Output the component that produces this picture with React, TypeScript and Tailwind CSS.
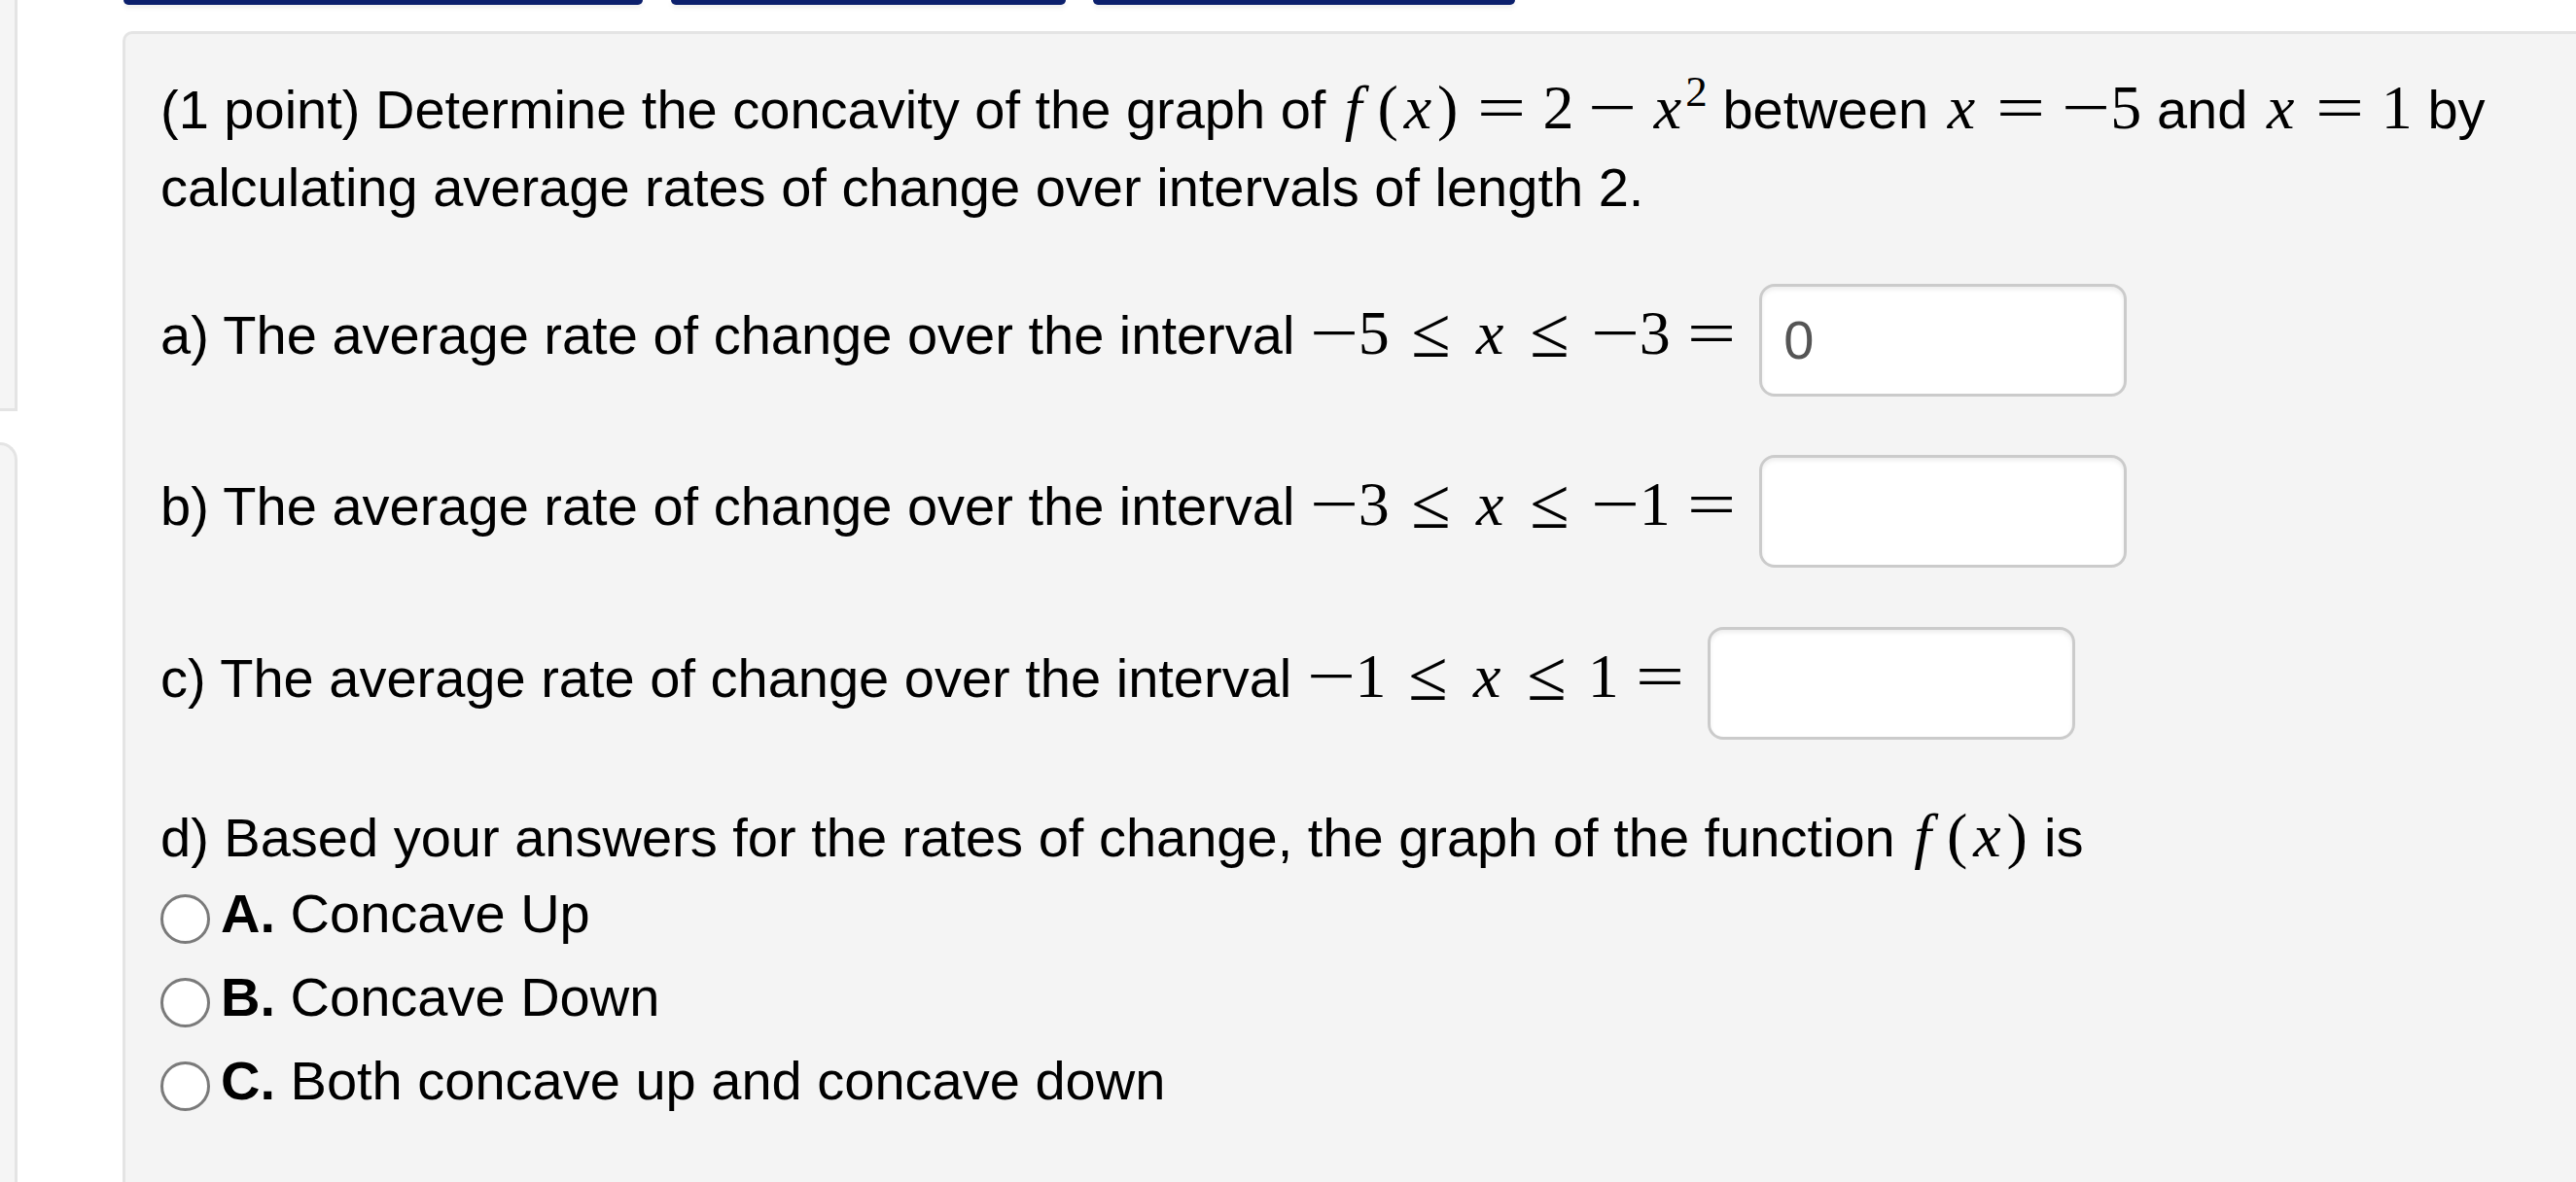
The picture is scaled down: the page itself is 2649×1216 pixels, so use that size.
import React from 'react';

// math pieces, set in a serif face like the TeX font
function M({ children }: { children: React.ReactNode }) {
  return (
    <span className="font-['Liberation_Serif',serif] text-[64px] leading-none whitespace-nowrap">
      {children}
    </span>
  );
}

// italic variable, padded out to the TeX advance width
function V({ c }: { c: string }) {
  const w = c === 'f' ? 'w-[0.56em] pl-[0.06em]' : 'w-[0.572em] text-center';
  return <span className={`inline-block italic ${w}`}>{c}</span>;
}

function P({ c }: { c: string }) {
  return <span className="inline-block w-[0.389em] text-center">{c}</span>;
}

// TeX operators are wider than the Times glyphs, so stretch them a bit
function Op({ children, wide = 1.4 }: { children: React.ReactNode; wide?: number }) {
  return (
    <span className="inline-block w-[0.778em] text-center">
      <span className={`inline-block ${wide > 1.3 ? 'scale-x-[1.4]' : 'scale-[1.15]'}`}>{children}</span>
    </span>
  );
}

function Rel({ children, right = true }: { children: React.ReactNode; right?: boolean }) {
  const le = children === '≤';
  return (
    <span className={right ? 'mx-[0.2778em]' : 'ml-[0.2778em]'}>
      <Op wide={le ? 1.15 : 1.4}>{children}</Op>
    </span>
  );
}

function Bin({ children }: { children: React.ReactNode }) {
  return (
    <span className="mx-[0.2222em]">
      <Op>{children}</Op>
    </span>
  );
}

function Neg({ n }: { n: string }) {
  if (!n.startsWith('−')) return <>{n}</>;
  return (
    <>
      <Op>−</Op>
      {n.slice(1)}
    </>
  );
}

function AnswerBox({ value = '' }: { value?: string }) {
  return (
    <input
      readOnly
      value={value}
      className="w-[378px] h-[116px] shrink-0 rounded-[16px] border-[3px] border-[#cbcbcb] bg-white px-[22px] text-[56px] text-[#555555] font-['Liberation_Sans',Arial,sans-serif] shadow-[inset_0_3px_4px_rgba(0,0,0,0.07)] outline-none"
    />
  );
}

const parts = [
  { label: 'a)', lo: '−5', hi: '−3', value: '0', mt: 'mt-[59px]' },
  { label: 'b)', lo: '−3', hi: '−1', value: '', mt: 'mt-[60px]' },
  { label: 'c)', lo: '−1', hi: '1', value: '', mt: 'mt-[61px]' },
];

const choices = [
  { key: 'A.', text: 'Concave Up' },
  { key: 'B.', text: 'Concave Down' },
  { key: 'C.', text: 'Both concave up and concave down' },
];

export default function App() {
  return (
    <div className="w-[2649px] h-[1216px] overflow-hidden bg-white flex font-['Liberation_Sans',Arial,sans-serif] text-black">
      {/* left sidebar edges */}
      <div className="w-[18px] shrink-0 flex flex-col">
        <div className="h-[423px] bg-[#f5f5f5] border-r-[3px] border-b-[3px] border-[#e4e4e4]" />
        <div className="mt-[32px] flex-1 bg-[#f5f5f5] border-r-[3px] border-t-[3px] border-[#e4e4e4] rounded-tr-[22px]" />
      </div>

      <div className="ml-[108px] flex flex-col">
        {/* nav tabs peeking in at the top */}
        <div className="flex h-[5px] pl-[1px]">
          <div className="w-[534px] rounded-b-[6px] bg-[#0b1f6c] shadow-[0_3px_5px_rgba(0,0,0,0.08)]" />
          <div className="ml-[29px] w-[406px] rounded-b-[6px] bg-[#0b1f6c] shadow-[0_3px_5px_rgba(0,0,0,0.08)]" />
          <div className="ml-[28px] w-[434px] rounded-b-[6px] bg-[#0b1f6c] shadow-[0_3px_5px_rgba(0,0,0,0.08)]" />
        </div>

        {/* problem panel */}
        <div className="mt-[27px] w-[2560px] h-[1300px] rounded-tl-[10px] border-l-[3px] border-t-[3px] border-[#e4e4e4] bg-[#f4f4f4] pl-[36px] pt-[38px] text-[56px] leading-[80px]">
          <p className="whitespace-nowrap">
            (1 point) Determine the concavity of the graph of{' '}
            <M>
              <V c="f" />
              <P c="(" />
              <V c="x" />
              <P c=")" />
              <Rel>=</Rel>2<Bin>−</Bin>
              <V c="x" />
              <sup className="text-[45px] top-[-23px]">2</sup>
            </M>{' '}
            between{' '}
            <M>
              <V c="x" />
              <Rel>=</Rel>
              <Neg n="−5" />
            </M>{' '}
            and{' '}
            <M>
              <V c="x" />
              <Rel>=</Rel>1
            </M>{' '}
            by
            <br />
            calculating average rates of change over intervals of length 2.
          </p>

          {parts.map((p) => (
            <div key={p.label} className={`flex items-start ${p.mt}`}>
              <p className="mt-[13px] whitespace-nowrap">
                {p.label} The average rate of change over the interval{' '}
                <M>
                  <Neg n={p.lo} />
                  <Rel>≤</Rel>
                  <V c="x" />
                  <Rel>≤</Rel>
                  <Neg n={p.hi} />
                  <Rel right={false}>=</Rel>
                </M>
              </p>
              <div className="ml-[24px]">
                <AnswerBox value={p.value} />
              </div>
            </div>
          ))}

          <p className="mt-[61px] whitespace-nowrap">
            d) Based your answers for the rates of change, the graph of the function{' '}
            <M>
              <V c="f" />
              <P c="(" />
              <V c="x" />
              <P c=")" />
            </M>{' '}
            is
          </p>

          <div className="-mt-[2px] flex flex-col gap-[6px]">
            {choices.map((c) => (
              <label key={c.key} className="flex h-[80px] items-center whitespace-nowrap">
                <span className="mt-[11px] h-[51px] w-[51px] shrink-0 rounded-full border-[3px] border-[#7a7a7a] bg-white" />
                <span className="ml-[11px]">
                  <b className="font-bold">{c.key}</b> {c.text}
                </span>
              </label>
            ))}
          </div>
        </div>
      </div>
    </div>
  );
}
